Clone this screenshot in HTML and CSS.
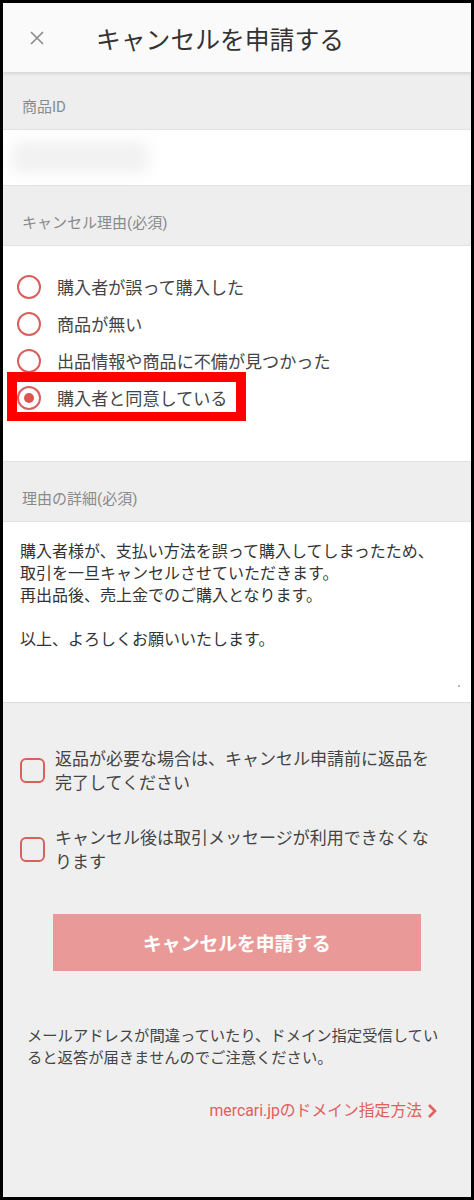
FILE: index.html
```html
<!DOCTYPE html>
<html lang="ja">
<head>
<meta charset="utf-8">
<title>キャンセルを申請する</title>
<link rel="stylesheet" href="styles.css">
</head>
<body>
<div class="screen">
  <header class="topbar">
    <svg class="close" viewBox="0 0 14 14" width="14" height="14" aria-hidden="true"><path d="M1 1L13 13M13 1L1 13" stroke="#8a8a8a" stroke-width="1.6" fill="none"/></svg>
    <h1 class="title">キャンセルを申請する</h1>
  </header>

  <div class="section-label first">商品ID</div>
  <div class="id-row"><div class="id-blur"></div></div>

  <div class="section-label">キャンセル理由(必須)</div>
  <div class="reasons">
    <div class="reason"><span class="radio"></span><span>購入者が誤って購入した</span></div>
    <div class="reason"><span class="radio"></span><span>商品が無い</span></div>
    <div class="reason"><span class="radio"></span><span>出品情報や商品に不備が見つかった</span></div>
    <div class="reason checked"><span class="radio"></span><span>購入者と同意している</span></div>
    <div class="highlight"></div>
  </div>

  <div class="section-label">理由の詳細(必須)</div>
  <div class="detail">
    <p>購入者様が、支払い方法を誤って購入してしまったため、<br>取引を一旦キャンセルさせていただきます。<br>再出品後、売上金でのご購入となります。<br><br>以上、よろしくお願いいたします。</p>
    <span class="resize-dot"></span>
  </div>

  <div class="confirm">
    <div class="check-item"><span class="checkbox"></span><span class="check-text">返品が必要な場合は、キャンセル申請前に返品を完了してください</span></div>
    <div class="check-item"><span class="checkbox"></span><span class="check-text">キャンセル後は取引メッセージが利用できなくなります</span></div>
  </div>

  <div class="submit">キャンセルを申請する</div>

  <p class="note">メールアドレスが間違っていたり、ドメイン指定受信していると返答が届きませんのでご注意ください。</p>

  <div class="link-row"><span class="link">mercari.jpのドメイン指定方法</span><svg class="chev" viewBox="0 0 10 16" width="10" height="16" aria-hidden="true"><path d="M2 2L8 8L2 14" stroke="#e0605d" stroke-width="2.6" fill="none"/></svg></div>
</div>
</body>
</html>
```
FILE: styles.css
```css
* { box-sizing: border-box; }
html, body { margin: 0; padding: 0; }
body {
  background: #000;
  font-family: Roboto, "Noto Sans CJK JP", sans-serif;
  color: #333;
}
.screen {
  margin: 3px;
  width: 468px;
  height: 1194px;
  background: #efefef;
  overflow: hidden;
  position: relative;
}
.topbar {
  height: 69px;
  background: #fafafa;
  display: flex;
  align-items: center;
  padding-left: 27px;
  box-shadow: 0 2px 3px rgba(0,0,0,0.10);
  position: relative;
  z-index: 1;
}
.close { flex: none; }
.title {
  margin: 0 0 0 52px;
  font-size: 24.8px;
  font-weight: normal;
  color: #333;
  line-height: 30px;
  font-family: "Noto Sans CJK JP", sans-serif;
}
.section-label {
  height: 60px;
  display: flex;
  align-items: flex-end;
  padding: 0 0 12px 19px;
  font-size: 15px;
  line-height: 20px;
  color: #8a8a8a;
  background: #eeeeee;
  border-bottom: 1px solid #e2e2e2;
}
.section-label.first { height: 58px; }
.id-row {
  height: 56px;
  background: #fff;
  border-bottom: 1px solid #e2e2e2;
  padding: 12px 0 0 9px;
}
.id-blur {
  width: 136px;
  height: 30px;
  background: #f1f1f1;
  filter: blur(7px);
}
.reasons {
  position: relative;
  background: #fff;
  height: 216px;
  padding: 22px 0 0 14px;
  border-bottom: 1px solid #e2e2e2;
}
.reason {
  height: 37px;
  display: flex;
  align-items: center;
  gap: 16px;
  font-size: 17.1px;
  color: #444;
}
.radio {
  width: 24px;
  height: 24px;
  border: 2px solid #d9605c;
  border-radius: 50%;
  flex: none;
  display: flex;
  align-items: center;
  justify-content: center;
}
.reason.checked .radio::after {
  content: "";
  width: 10px;
  height: 10px;
  border-radius: 50%;
  background: #dd5450;
}
.highlight {
  position: absolute;
  left: 4px;
  top: 126px;
  width: 239px;
  height: 49px;
  border: 10px solid #ff0000;
  border-bottom-width: 9px;
}
.detail {
  position: relative;
  background: #fff;
  height: 181px;
  padding: 19px 17px 0 17px;
  border-bottom: 1px solid #dcdcdc;
}
.detail p {
  margin: 0;
  font-size: 16px;
  line-height: 22px;
  color: #333;
}
.resize-dot {
  position: absolute;
  right: 11px;
  bottom: 15px;
  width: 2px;
  height: 2px;
  background: #bbb;
}
.confirm {
  padding: 45px 36px 0 17px;
  display: flex;
  flex-direction: column;
  gap: 32px;
}
.check-item {
  display: flex;
  align-items: center;
  gap: 10px;
}
.checkbox {
  flex: none;
  width: 25px;
  height: 25px;
  border: 2.5px solid #d9605c;
  border-radius: 6px;
  margin-top: -3px;
}
.check-text {
  font-size: 17px;
  line-height: 23.5px;
  color: #444;
}
.submit {
  margin: 40px auto 0;
  width: 368px;
  height: 57px;
  background: #e99a98;
  color: #fff;
  font-weight: bold;
  font-size: 18.8px;
  display: flex;
  align-items: center;
  justify-content: center;
  font-family: "Noto Sans CJK JP", sans-serif;
}
.note {
  margin: 54px 0 0;
  padding: 0 24px;
  font-size: 15.3px;
  line-height: 22px;
  color: #444;
}
.link-row {
  margin-top: 31px;
  padding-right: 34px;
  display: flex;
  justify-content: flex-end;
  align-items: center;
  gap: 5px;
}
.link {
  font-size: 15.8px;
  line-height: 22px;
  color: #e0605d;
}
.chev { flex: none; }
```
